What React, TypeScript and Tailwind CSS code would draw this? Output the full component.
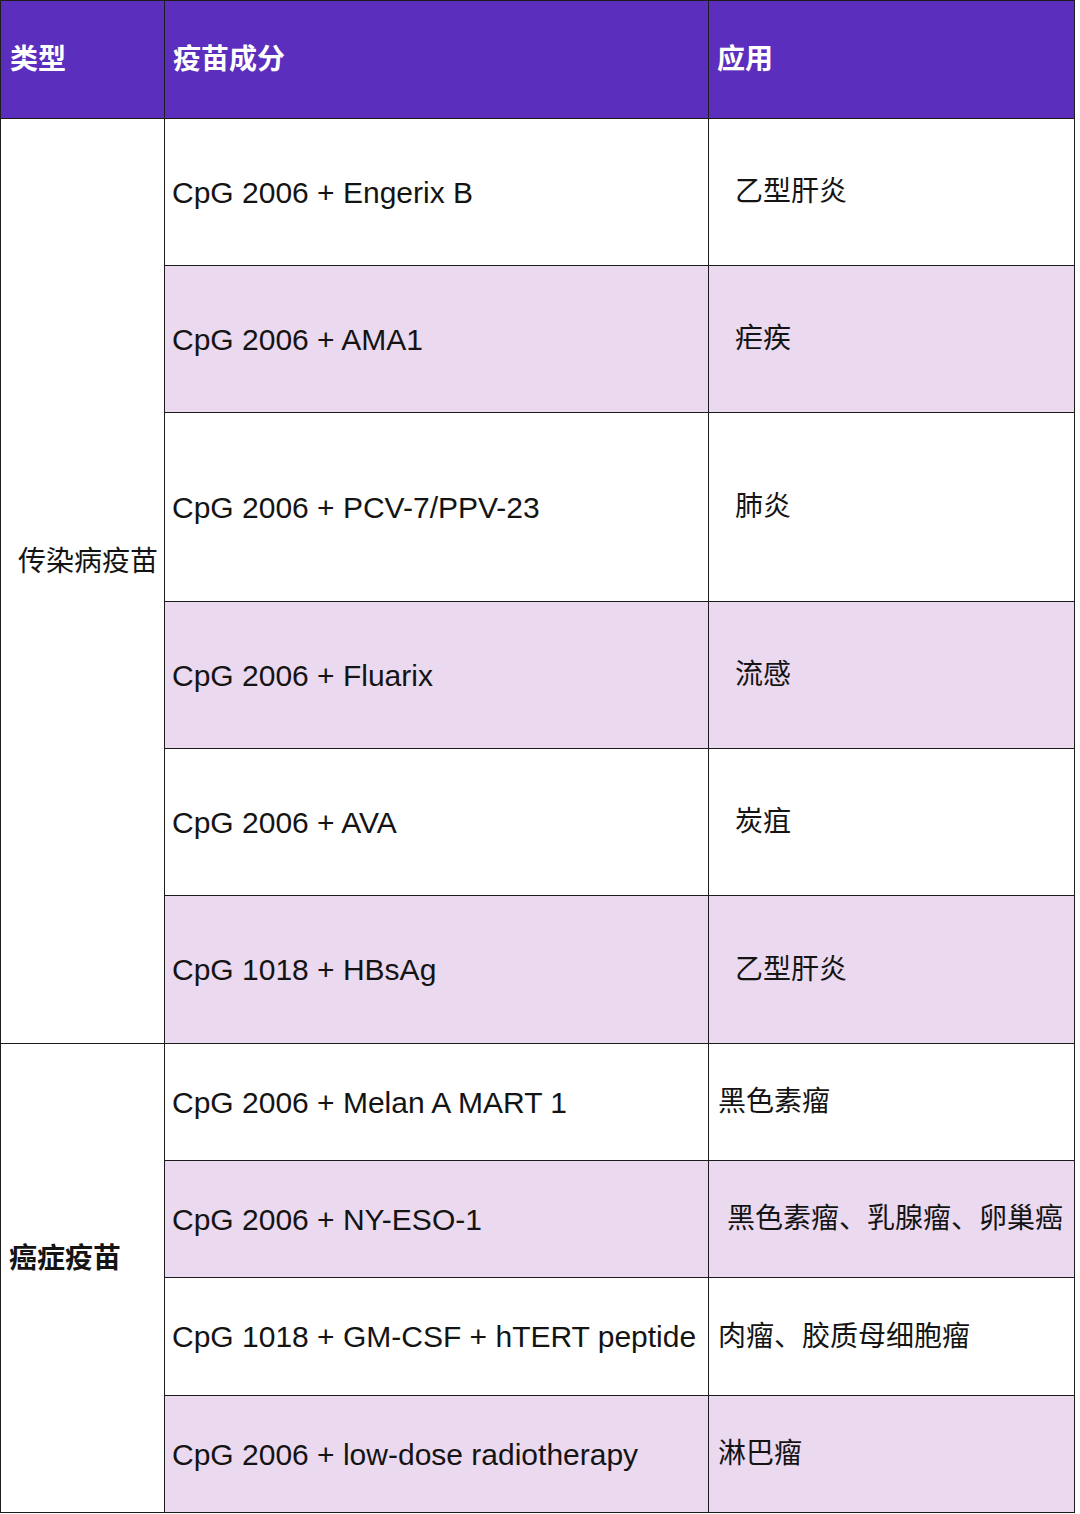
import React from "react";

type Row = {
  vaccine: string;
  use: string;
  h: string;
  pink: boolean;
  usePad: string;
};

const infectious: Row[] = [
  { vaccine: "CpG 2006 + Engerix B", use: "乙型肝炎", h: "h-[147px]", pink: false, usePad: "pl-[26px]" },
  { vaccine: "CpG 2006 + AMA1", use: "疟疾", h: "h-[147px]", pink: true, usePad: "pl-[26px]" },
  { vaccine: "CpG 2006 + PCV-7/PPV-23", use: "肺炎", h: "h-[189px]", pink: false, usePad: "pl-[26px]" },
  { vaccine: "CpG 2006 + Fluarix", use: "流感", h: "h-[147px]", pink: true, usePad: "pl-[26px]" },
  { vaccine: "CpG 2006 + AVA", use: "炭疽", h: "h-[147px]", pink: false, usePad: "pl-[26px]" },
  { vaccine: "CpG 1018 + HBsAg", use: "乙型肝炎", h: "h-[148px]", pink: true, usePad: "pl-[26px]" },
];

const cancer: Row[] = [
  { vaccine: "CpG 2006 + Melan A MART 1", use: "黑色素瘤", h: "h-[117px]", pink: false, usePad: "pl-[9px]" },
  { vaccine: "CpG 2006 + NY-ESO-1", use: "黑色素瘤、乳腺瘤、卵巢癌", h: "h-[117px]", pink: true, usePad: "pl-[18px]" },
  { vaccine: "CpG 1018 + GM-CSF + hTERT peptide", use: "肉瘤、胶质母细胞瘤", h: "h-[118px]", pink: false, usePad: "pl-[9px]" },
  { vaccine: "CpG 2006 + low-dose radiotherapy", use: "淋巴瘤", h: "h-[117px]", pink: true, usePad: "pl-[9px]" },
];

const cell = "border border-[#1c1c1c] align-middle";

function BodyRows({ rows, group, groupClass }: { rows: Row[]; group: string; groupClass: string }) {
  return (
    <>
      {rows.map((r, idx) => (
        <tr key={r.vaccine} className={r.h}>
          {idx === 0 && (
            <td rowSpan={rows.length} className={`${cell} bg-white ${groupClass}`}>
              {group}
            </td>
          )}
          <td className={`${cell} ${r.pink ? "bg-[#ebd9ef]" : "bg-white"} pl-[7px] text-[30px] whitespace-nowrap`}>
            {r.vaccine}
          </td>
          <td className={`${cell} ${r.pink ? "bg-[#ebd9ef]" : "bg-white"} ${r.usePad} text-[28px] whitespace-nowrap`}>
            {r.use}
          </td>
        </tr>
      ))}
    </>
  );
}

export default function App() {
  return (
    <div className="w-[1080px] h-[1514px] bg-white text-[#141414] font-['Liberation_Sans','Noto_Sans_CJK_SC',sans-serif]">
      <table className="table-fixed border-collapse w-[1074px]">
        <colgroup>
          <col className="w-[164px]" />
          <col className="w-[544px]" />
          <col className="w-[366px]" />
        </colgroup>
        <thead>
          <tr className="h-[118px] bg-[#5c2ebd] text-white text-[28px] font-bold">
            <th className={`${cell} text-left pl-[9px]`}>类型</th>
            <th className={`${cell} text-left pl-[8px]`}>疫苗成分</th>
            <th className={`${cell} text-left pl-[8px]`}>应用</th>
          </tr>
        </thead>
        <tbody>
          <BodyRows rows={infectious} group="传染病疫苗" groupClass="text-[28px] pl-[17px] pb-[38px]" />
          <BodyRows rows={cancer} group="癌症疫苗" groupClass="text-[28px] font-bold pl-[8px] pb-[38px]" />
        </tbody>
      </table>
    </div>
  );
}
